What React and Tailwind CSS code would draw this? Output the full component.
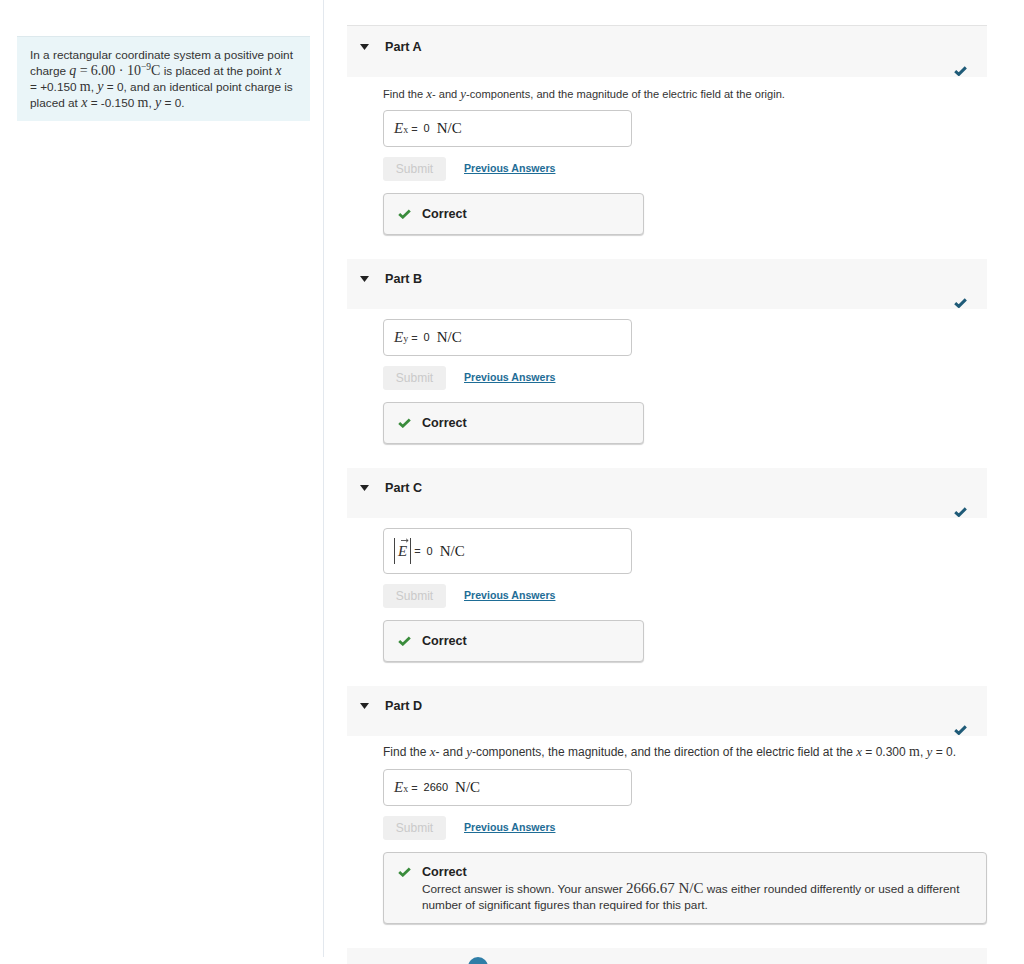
import React from "react";

const sans = { fontFamily: '"Liberation Sans", Arial, Helvetica, sans-serif' };
const serif = { fontFamily: '"Liberation Serif", "DejaVu Serif", serif' };

function MI({ children, cls = "text-[14px]" }) {
  return (
    <span className={"italic " + cls} style={serif}>
      {children}
    </span>
  );
}
function MR({ children, cls = "text-[14px]" }) {
  return (
    <span className={cls} style={serif}>
      {children}
    </span>
  );
}

function Triangle() {
  return (
    <svg width="9" height="6" viewBox="0 0 9 6" className="block">
      <path d="M0 0 L9 0 L4.5 6 Z" fill="#222" />
    </svg>
  );
}

function HeadCheck() {
  return (
    <svg width="13" height="10" viewBox="0 0 13 10" className="block">
      <path d="M1.2 5.2 L4.8 8.4 L11.8 1.4" fill="none" stroke="#1f5b78" strokeWidth="3" />
    </svg>
  );
}

function GreenCheck() {
  return (
    <svg width="13" height="10" viewBox="0 0 13 10" className="block">
      <path d="M1.2 5 L4.8 8.2 L11.8 1.4" fill="none" stroke="#3a8c3c" strokeWidth="2.8" />
    </svg>
  );
}

function PartHeader({ title, border }) {
  return (
    <div
      className={
        "flex flex-col bg-[#f7f7f7] " +
        (border ? "h-[52px] border-t border-[#e3e3e3]" : "h-[50px]")
      }
    >
      <div className={"flex items-center pl-[13px] " + (border ? "pt-[14px]" : "pt-[13px]")}>
        <Triangle />
        <span className="ml-[16px] text-[12.6px] leading-[14px] font-bold text-[#222]">{title}</span>
      </div>
      <div className="mt-auto flex justify-end pr-[20px] pb-[1px]">
        <HeadCheck />
      </div>
    </div>
  );
}

function InputBox({ children, tall }) {
  return (
    <div
      className={
        "flex items-center w-[249px] border border-[#c9c9c9] rounded-[4px] bg-white pl-[10px] " +
        (tall ? "h-[46px]" : "h-[37px]")
      }
    >
      {children}
    </div>
  );
}

function Actions() {
  return (
    <div className="flex items-center mt-[10px]">
      <div className="w-[63px] h-[24px] rounded-[3px] bg-[#efefef] flex items-center justify-center text-[12px] text-[#cacaca]">
        Submit
      </div>
      <a className="ml-[18px] text-[10.6px] font-bold text-[#1e6d96] underline">Previous Answers</a>
    </div>
  );
}

function CorrectBox() {
  return (
    <div className="mt-[12px] w-[261px] h-[42px] border border-[#c9c9c9] rounded-[4px] bg-[#f7f7f7] shadow-[0_1px_1px_rgba(0,0,0,0.18)] flex items-center pl-[14px]">
      <GreenCheck />
      <span className="ml-[11px] text-[12.6px] font-bold text-[#222]">Correct</span>
    </div>
  );
}

function EqLabel({ sub }) {
  return (
    <span className="flex items-baseline">
      <MI cls="text-[15px]">E</MI>
      <MR cls="text-[10px]">{sub}</MR>
      <span className="ml-[3px] text-[11px] text-[#333]">=</span>
    </span>
  );
}

function Unit() {
  return <MR cls="text-[15px] ml-[7px] text-[#222]">N/C</MR>;
}

export default function App() {
  return (
    <div className="w-[1024px] h-[964px] overflow-hidden bg-white text-[#333] flex" style={sans}>
      {/* Left column */}
      <div className="w-[310px] pl-[17px] pt-[36px] shrink-0">
        <div className="bg-[#eaf5f8] border-t border-[#dde9ed] h-[85px] pl-[13px] pt-[10px] text-[11.8px] leading-[16px] text-[#333] whitespace-nowrap">
          In a rectangular coordinate system a positive point
          <br />
          charge <MI>q</MI> <MR>=</MR> <MR>6.00 · 10</MR>
          <sup className="text-[9.5px]" style={serif}>−9</sup>
          <MR>C</MR> is placed at the point <MI>x</MI>
          <br />= +0.150 <MR>m</MR>, <MI>y</MI> = 0, and an identical point charge is
          <br />
          placed at <MI>x</MI> = -0.150 <MR>m</MR>, <MI>y</MI> = 0.
        </div>
      </div>

      {/* Divider */}
      <div className="ml-[13px] w-px h-[957px] bg-[#e3e8ee] shrink-0" />

      {/* Main */}
      <div className="ml-[23px] w-[640px] pt-[25px] shrink-0">
        {/* Part A */}
        <PartHeader title="Part A" border />
        <div className="pl-[36px] pt-[9px]">
          <p className="text-[11.1px] leading-[16px] text-[#333] whitespace-nowrap">
            Find the <MI cls="text-[13px]">x</MI>- and <MI cls="text-[13px]">y</MI>-components, and the magnitude of the electric field at the origin.
          </p>
          <div className="mt-[8px]">
            <InputBox>
              <EqLabel sub="x" />
              <span className="ml-[6px] text-[11px] text-[#222]">0</span>
              <Unit />
            </InputBox>
          </div>
          <Actions />
          <CorrectBox />
        </div>

        {/* Part B */}
        <div className="mt-[24px]">
          <PartHeader title="Part B" />
          <div className="pl-[36px] pt-[10px]">
            <InputBox>
              <EqLabel sub="y" />
              <span className="ml-[6px] text-[11px] text-[#222]">0</span>
              <Unit />
            </InputBox>
            <Actions />
            <CorrectBox />
          </div>
        </div>

        {/* Part C */}
        <div className="mt-[24px]">
          <PartHeader title="Part C" />
          <div className="pl-[36px] pt-[10px]">
            <InputBox tall>
              <span className="flex items-center">
                <span className="flex items-center h-[26px] border-l border-r border-[#444] px-[3px]">
                  <span className="relative inline-block">
                    <MI cls="text-[15px]">E</MI>
                    <svg width="8" height="5" viewBox="0 0 8 5" className="absolute left-[3px] top-[-1px]">
                      <path d="M0 2.5 H7 M5 0.8 L7.2 2.5 L5 4.2" fill="none" stroke="#333" strokeWidth="0.8" />
                    </svg>
                  </span>
                </span>
                <span className="ml-[3px] text-[11px] text-[#333]">=</span>
              </span>
              <span className="ml-[6px] text-[11px] text-[#222]">0</span>
              <Unit />
            </InputBox>
            <Actions />
            <CorrectBox />
          </div>
        </div>

        {/* Part D */}
        <div className="mt-[24px]">
          <PartHeader title="Part D" />
          <div className="pl-[36px] pt-[8px]">
            <p className="text-[12px] leading-[16px] text-[#333] whitespace-nowrap">
              Find the <MI cls="text-[13px]">x</MI>- and <MI cls="text-[13px]">y</MI>-components, the magnitude, and the direction of the electric field at the{" "}
              <MI cls="text-[13px]">x</MI> = 0.300 <MR>m</MR>, <MI cls="text-[13px]">y</MI> = 0.
            </p>
            <div className="mt-[9px]">
              <InputBox>
                <EqLabel sub="x" />
                <span className="ml-[6px] text-[11px] text-[#222]">2660</span>
                <Unit />
              </InputBox>
            </div>
            <Actions />
            <div className="mt-[12px] w-[604px] h-[72px] border border-[#c9c9c9] rounded-[4px] bg-[#f7f7f7] shadow-[0_1px_1px_rgba(0,0,0,0.18)] flex pl-[14px] pt-[11px]">
              <div className="pt-[3px]">
                <GreenCheck />
              </div>
              <div className="ml-[11px]">
                <div className="text-[12.6px] leading-[16px] font-bold text-[#222]">Correct</div>
                <div className="text-[11.8px] leading-[16px] text-[#333] whitespace-nowrap">
                  Correct answer is shown. Your answer <MR cls="text-[15px]">2666.67 N/C</MR> was either rounded differently or used a different
                  <br />
                  number of significant figures than required for this part.
                </div>
              </div>
            </div>
          </div>
        </div>

        {/* Next section */}
        <div className="mt-[24px] h-[40px] bg-[#f7f7f7] relative">
          <div className="absolute left-[121px] top-[9px] w-[20px] h-[20px] rounded-full bg-[#2f7ea7]" />
        </div>
      </div>
    </div>
  );
}
